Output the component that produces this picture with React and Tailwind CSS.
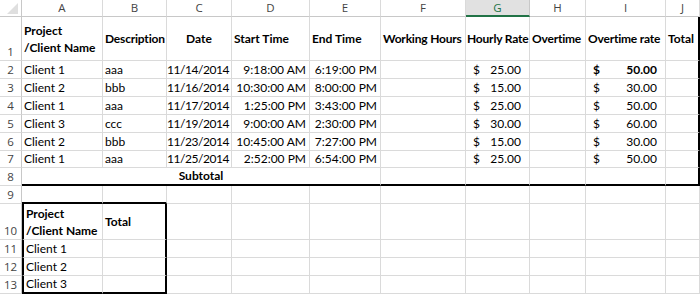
import React from "react";
import clsx from "clsx";

const COLS = ["A", "B", "C", "D", "E", "F", "G", "H", "I", "J"];

const ROWS = [
  { n: 2, client: "Client 1", desc: "aaa", date: "11/14/2014", start: "9:18:00 AM", end: "6:19:00 PM", rate: "25.00", ot: "50.00", otBold: true },
  { n: 3, client: "Client 2", desc: "bbb", date: "11/16/2014", start: "10:30:00 AM", end: "8:00:00 PM", rate: "15.00", ot: "30.00" },
  { n: 4, client: "Client 1", desc: "aaa", date: "11/17/2014", start: "1:25:00 PM", end: "3:43:00 PM", rate: "25.00", ot: "50.00" },
  { n: 5, client: "Client 3", desc: "ccc", date: "11/19/2014", start: "9:00:00 AM", end: "2:30:00 PM", rate: "30.00", ot: "60.00" },
  { n: 6, client: "Client 2", desc: "bbb", date: "11/23/2014", start: "10:45:00 AM", end: "7:27:00 PM", rate: "15.00", ot: "30.00" },
  { n: 7, client: "Client 1", desc: "aaa", date: "11/25/2014", start: "2:52:00 PM", end: "6:54:00 PM", rate: "25.00", ot: "50.00" },
];

const BOTTOM = {
  grid: "border-b border-b-[#dadada]",
  thick: "border-b-2 border-b-black",
  none: "",
};

const RIGHT = {
  grid: "border-r border-r-[#dadada]",
  thick: "border-r-2 border-r-black",
  none: "",
};

// one spreadsheet cell, gridlines drawn on right + bottom
const Cell = ({ b = "grid", r = "grid", l = false, className, children }) => (
  <div
    className={clsx(
      "flex overflow-hidden whitespace-nowrap text-[12px] leading-[15px] text-black",
      BOTTOM[b],
      RIGHT[r],
      l && "border-l-2 border-l-black",
      className
    )}
  >
    {children}
  </div>
);

const RowNum = ({ n }) => (
  <div className="flex items-end justify-center border-r border-b border-r-[#c8c8c8] border-b-[#dadada] pb-[1px] font-['Open_Sans',sans-serif] text-[11.5px] leading-[15px] text-[#444]">
    {n}
  </div>
);

const Money = ({ value, bold }) => (
  <div className={clsx("flex w-full items-end justify-between pb-[1px] pl-[7px] pr-[8px]", bold && "font-bold")}>
    <span>$</span>
    <span>{value}</span>
  </div>
);

const App = () => {
  return (
    <div className="h-[295px] w-[700px] overflow-hidden bg-white font-[Lato,sans-serif]">
      <div className="grid grid-cols-[22px_81px_64px_65px_78px_71px_85px_64px_56px_80px_34px] grid-rows-[17px_44px_18px_18px_18px_18px_18px_17px_18px_18px_36px_18px_18px_18px]">
        {/* column headers */}
        <div className="relative border-r border-b border-r-[#c8c8c8] border-b-[#c8c8c8]">
          <svg className="absolute right-[3px] bottom-[2px]" width="11" height="11" viewBox="0 0 11 11">
            <polygon points="0,11 11,0 11,11" fill="#dfdfdf" />
          </svg>
        </div>
        {COLS.map((c) =>
          c === "G" ? (
            <div
              key={c}
              className="flex items-center justify-center border-r border-b-2 border-r-[#c8c8c8] border-b-[#217346] bg-[#e1e1e1] font-['Open_Sans',sans-serif] text-[11.5px] text-[#217346]"
            >
              {c}
            </div>
          ) : (
            <div
              key={c}
              className="flex items-center justify-center border-r border-b border-r-[#dadada] border-b-[#c8c8c8] font-['Open_Sans',sans-serif] text-[11.5px] text-[#444]"
            >
              {c}
            </div>
          )
        )}

        {/* row 1: headings */}
        <RowNum n={1} />
        <Cell className="flex-col justify-center px-[2px] font-bold leading-[17px]">
          <span>Project</span>
          <span>/Client Name</span>
        </Cell>
        <Cell className="items-center px-[2px] font-bold tracking-[-0.2px]">Description</Cell>
        <Cell className="items-center justify-center px-[2px] font-bold">Date</Cell>
        <Cell className="items-center px-[2px] font-bold">Start Time</Cell>
        <Cell className="items-center px-[2px] font-bold">End Time</Cell>
        <Cell className="items-center px-[2px] font-bold tracking-[-0.2px]">Working Hours</Cell>
        <Cell className="items-center px-[1px] font-bold tracking-[-0.2px]">Hourly Rate</Cell>
        <Cell className="items-center px-[2px] font-bold tracking-[-0.2px]">Overtime</Cell>
        <Cell className="items-center px-[2px] font-bold tracking-[-0.2px]">Overtime rate</Cell>
        <Cell r="thick" className="items-center px-[2px] font-bold">Total</Cell>

        {/* rows 2-7: entries */}
        {ROWS.map((row) => (
          <React.Fragment key={row.n}>
            <RowNum n={row.n} />
            <Cell className="items-end px-[2px] pb-[1px]">{row.client}</Cell>
            <Cell className="items-end px-[2px] pb-[1px]">{row.desc}</Cell>
            <Cell className="items-end justify-end pr-[2px] pb-[1px] tracking-[-0.45px]">{row.date}</Cell>
            <Cell className="items-end justify-end pr-[3px] pb-[1px]">{row.start}</Cell>
            <Cell className="items-end justify-end pr-[3px] pb-[1px]">{row.end}</Cell>
            <Cell />
            <Cell>
              <Money value={row.rate} />
            </Cell>
            <Cell />
            <Cell>
              <Money value={row.ot} bold={row.otBold} />
            </Cell>
            <Cell r="thick" />
          </React.Fragment>
        ))}

        {/* row 8: subtotal, A:E merged */}
        <RowNum n={8} />
        <Cell b="thick" className="col-span-5 items-end justify-center pb-[1px] font-bold">
          Subtotal
        </Cell>
        <Cell b="thick" />
        <Cell b="thick" />
        <Cell b="thick" />
        <Cell b="thick" />
        <Cell b="thick" r="thick" />

        {/* row 9 */}
        <RowNum n={9} />
        <Cell b="thick" />
        <Cell b="thick" />
        {COLS.slice(2).map((c) => (
          <Cell key={c} />
        ))}

        {/* row 10: summary heading */}
        <RowNum n={10} />
        <Cell l className="flex-col justify-center px-[2px] font-bold leading-[17px]">
          <span>Project</span>
          <span>/Client Name</span>
        </Cell>
        <Cell r="thick" className="items-center px-[2px] font-bold">Total</Cell>
        {COLS.slice(2).map((c) => (
          <Cell key={c} />
        ))}

        {/* rows 11-13 */}
        {["Client 1", "Client 2", "Client 3"].map((name, i) => (
          <React.Fragment key={name}>
            <RowNum n={11 + i} />
            <Cell l b={i === 2 ? "thick" : "grid"} className="items-end px-[2px] pb-[1px]">
              {name}
            </Cell>
            <Cell r="thick" b={i === 2 ? "thick" : "grid"} />
            {COLS.slice(2).map((c) => (
              <Cell key={c} />
            ))}
          </React.Fragment>
        ))}
      </div>
    </div>
  );
};

export default App;
